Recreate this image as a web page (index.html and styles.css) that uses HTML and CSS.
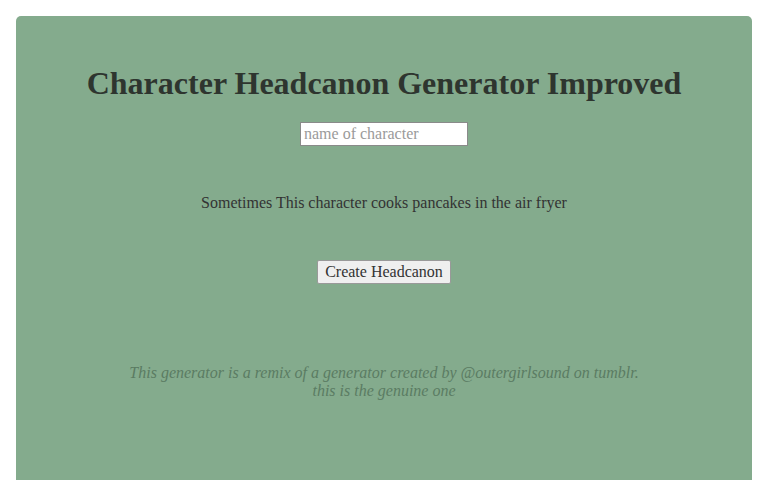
FILE: index.html
```html
<!DOCTYPE html>
<html lang="en">
<head>
  <meta charset="UTF-8" />
  <meta name="viewport" content="width=device-width, initial-scale=1.0"/>
  <title>Character Headcanon Generator Improved</title>
  <link rel="stylesheet" href="styles.css">
</head>
<body>
  <div class="card">
    <h1>Character Headcanon Generator Improved</h1>
    <input type="text" id="name" placeholder="name of character" />
    <p class="result" id="output">Sometimes This character cooks pancakes in the air fryer</p>
    <button onclick="generate()">Create Headcanon</button>
    <p class="credit">This generator is a remix of a generator created by @outergirlsound on tumblr.<br>this is the genuine one</p>
  </div>
  <script>
    const lines = [
      "Sometimes {n} cooks pancakes in the air fryer",
      "{n} hums when they think nobody is listening",
      "{n} keeps every receipt in a shoebox",
      "{n} names all of their houseplants"
    ];
    function generate() {
      const name = document.getElementById("name").value || "This character";
      const pick = lines[Math.floor(Math.random() * lines.length)];
      document.getElementById("output").textContent = pick.replace("{n}", name);
    }
  </script>
</body>
</html>
```

FILE: styles.css
```css
body {
  margin: 16px 16px 0;
  font-family: "Liberation Serif", serif;
  background: #fff;
}
.card {
  background: #84ab8d;
  border-radius: 5px 5px 0 0;
  text-align: center;
  padding: 28px 20px 40px;
  min-height: 396px;
  color: #333;
}
h1 {
  font-size: 32px;
  margin: 21px 0 20px;
  color: #2e352f;
}
input {
  font-family: "Liberation Serif", serif;
  font-size: 16px;
  width: 168px;
  height: 24px;
  box-sizing: border-box;
  padding: 1px 3px;
  border: 1px solid #8a8a8a;
  background: #fff;
  display: block;
  margin: 0 auto;
}
input::placeholder {
  color: #9a9a9a;
}
.result {
  font-size: 16px;
  line-height: 18px;
  margin: 48px 0 0;
  color: #333;
}
button {
  font-family: "Liberation Serif", serif;
  font-size: 16px;
  height: 24px;
  padding: 0 7px;
  margin-top: 48px;
  background: #efefef;
  border: 1px solid #999;
  border-radius: 2px;
  color: #333;
}
.credit {
  font-style: italic;
  font-size: 16px;
  line-height: 18px;
  color: #5b7c63;
  margin: 80px 0 0;
}
```
